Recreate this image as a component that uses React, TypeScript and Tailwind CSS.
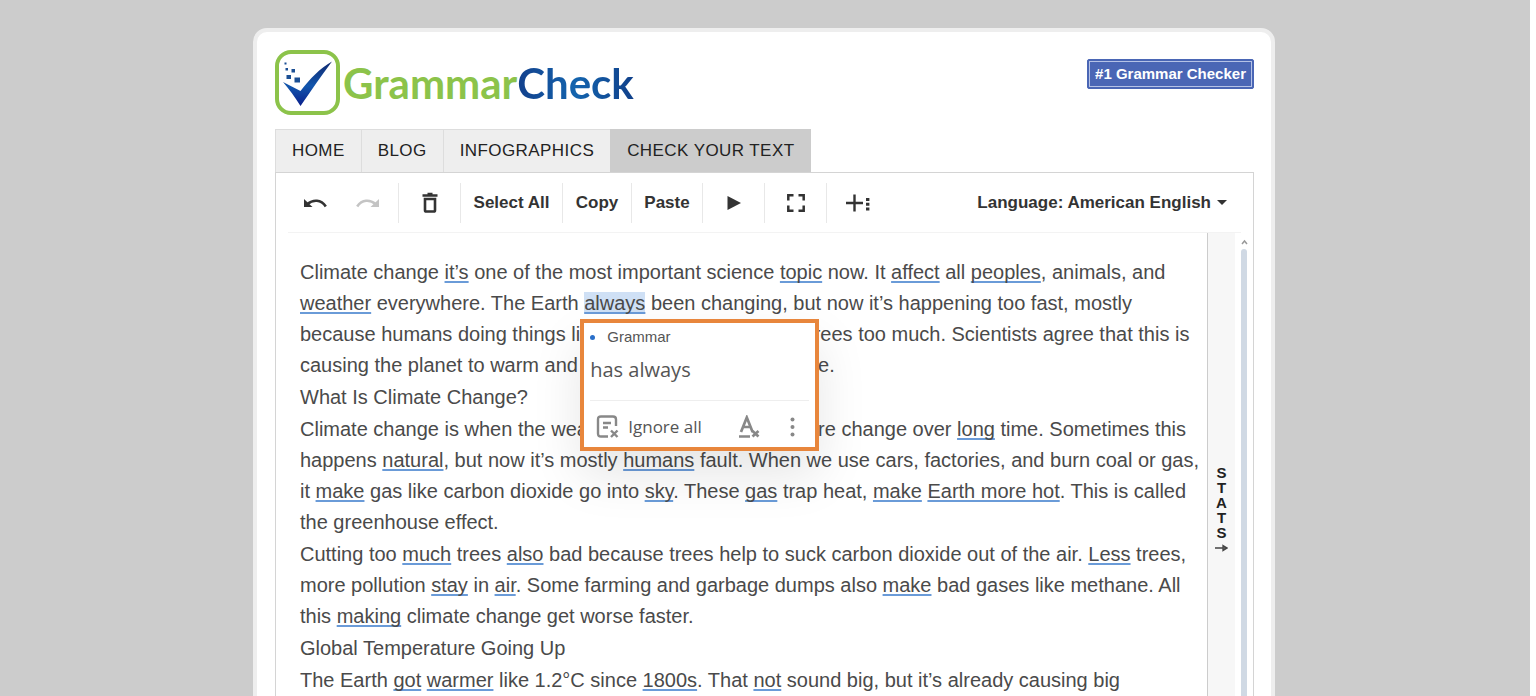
import React from 'react';

const issue = 'underline decoration-2 decoration-[#6a9bd8] underline-offset-2 [text-decoration-skip-ink:none]';

const Mark = ({ children }: { children: React.ReactNode }) => <span className={issue}>{children}</span>;

const Logo = () => (
  <a href="#" className="flex items-center gap-[3px] font-['Lato',sans-serif]">
    <svg width="65" height="65" viewBox="0 0 65 65" aria-hidden="true">
      <defs>
        <linearGradient id="check" x1="0" y1="1" x2="0" y2="0">
          <stop offset="0" stopColor="#0a1f8c" />
          <stop offset="0.45" stopColor="#1256ad" />
          <stop offset="1" stopColor="#10296f" />
        </linearGradient>
      </defs>
      <rect x="2" y="2" width="61" height="61" rx="14" fill="#fff" stroke="#8cc34a" strokeWidth="4" />
      <path d="M8 32 L25.5 41 C35 29 45 18 57 11.5 C46 26 36 41 25.5 56 C20 47 14 39 8 32 Z" fill="url(#check)" />
      <g fill="#1b4f94">
        <rect x="19.5" y="27.5" width="5.5" height="5" />
        <rect x="11.5" y="25" width="4.5" height="4" />
        <rect x="16.5" y="19" width="3.5" height="3.5" />
        <rect x="10.5" y="18" width="2.5" height="2.5" />
        <rect x="9.5" y="12.5" width="2" height="2" />
      </g>
    </svg>
    <span className="text-[42px] leading-[64px] font-bold">
      <span className="text-[#8cc34a]">Grammar</span>
      <span className="bg-linear-to-r from-[#12408c] via-[#1464ae] to-[#10408a] bg-clip-text text-transparent">Check</span>
    </span>
  </a>
);

const tabs = ['HOME', 'BLOG', 'INFOGRAPHICS'];

const Tabs = () => (
  <nav className="flex text-[17px] leading-[42px] tracking-wide text-[#222]">
    {tabs.map((tab) => (
      <a key={tab} href="#" className="border-l border-t border-[#ddd] bg-[#eee] px-4">
        {tab}
      </a>
    ))}
    <a href="#" className="border-t border-[#ccc] bg-[#ccc] px-[17px]">
      CHECK YOUR TEXT
    </a>
  </nav>
);

const UndoIcon = ({ className = '' }: { className?: string }) => (
  <svg className={className} width="24" height="24" viewBox="0 0 24 24" fill="none" aria-hidden="true">
    <path d="M1 8v8h8.5z" fill="currentColor" />
    <path d="M4.5 13C10 8.3 18 8.3 22.8 15.5" stroke="currentColor" strokeWidth="2.6" />
  </svg>
);

const Toolbar = () => (
  <div className="mx-3 flex h-[60px] items-center border-b border-[#f3f3f3] text-[17px] font-bold text-[#333]">
    <button aria-label="Undo" className="flex w-[53px] justify-center">
      <UndoIcon />
    </button>
    <button aria-label="Redo" className="flex w-[53px] justify-center text-[#c4c4c4]">
      <UndoIcon className="-scale-x-100" />
    </button>
    <button aria-label="Delete" className="ml-1 flex h-10 w-[62px] items-center justify-center border-l border-[#e8e8e8]">
      <svg width="24" height="24" viewBox="0 0 24 24" fill="none" stroke="currentColor" strokeWidth="2.6" aria-hidden="true">
        <path d="M4.5 4.5h15M9.5 3h5M7 8v11.2q0 1.3 1.3 1.3h7.4q1.3 0 1.3-1.3V8z" />
      </svg>
    </button>
    <button className="h-10 w-[102px] border-l border-[#e8e8e8]">Select All</button>
    <button className="h-10 w-[69px] border-l border-[#e8e8e8]">Copy</button>
    <button className="h-10 w-[71px] border-l border-[#e8e8e8]">Paste</button>
    <button aria-label="Play" className="flex h-10 w-[62px] items-center justify-center border-l border-[#e8e8e8]">
      <svg width="14" height="14" viewBox="0 0 14 14" fill="currentColor" aria-hidden="true">
        <path d="M0.5 0v14L14 7z" />
      </svg>
    </button>
    <button aria-label="Full screen" className="flex h-10 w-[62px] items-center justify-center border-l border-[#e8e8e8]">
      <svg width="18" height="18" viewBox="0 0 18 18" fill="none" stroke="currentColor" strokeWidth="2.5" aria-hidden="true">
        <path d="M6.5 1.3H1.3v5.2M11.5 1.3h5.2v5.2M6.5 16.7H1.3v-5.2M11.5 16.7h5.2v-5.2" />
      </svg>
    </button>
    <button aria-label="More tools" className="flex h-10 w-[62px] items-center justify-center border-l border-[#e8e8e8]">
      <svg width="24" height="18" viewBox="0 0 24 18" fill="currentColor" aria-hidden="true">
        <path d="M0 7.8h17v2.4H0zM7.3 0.5h2.4v17H7.3zM20 4h3.4v3H20zM20 8.7h3.4v3H20zM20 13.4h3.4v3H20z" />
      </svg>
    </button>
    <button className="ml-auto flex items-center gap-[6px] pr-[14px]">
      Language: American English
      <svg width="10" height="5" viewBox="0 0 10 5" fill="currentColor" aria-hidden="true">
        <path d="M0 0h10L5 5z" />
      </svg>
    </button>
  </div>
);

const Popup = () => (
  <div
    role="dialog"
    aria-label="Grammar suggestion"
    className="absolute top-[27px] -left-1 z-10 w-[239px] border-4 border-[#e8863c] bg-white px-1.5 text-[#555] shadow-[0_24px_50px_rgba(0,0,0,0.10)]"
  >
    <div className="flex items-center gap-3 pt-1 text-[15px] leading-5">
      <span className="size-[5px] rounded-full bg-[#2a6fc9]" />
      Grammar
    </div>
    <button className="block w-full pt-2 pb-4 text-left font-['Open_Sans',sans-serif] text-[20px] leading-[29px]">
      has always
    </button>
    <div className="flex h-[47px] items-center border-t border-[#eee] pt-1.5 pr-2 pl-1.5 font-['Open_Sans',sans-serif] text-[#888]">
      <button className="flex items-center gap-2 text-[17px] leading-6">
        <svg width="24" height="24" viewBox="0 0 24 24" fill="none" stroke="currentColor" strokeWidth="2.4" aria-hidden="true">
          <path d="M12 21.5H5Q2 21.5 2 18.5V4.5Q2 1.5 5 1.5h12Q20 1.5 20 4.5V11M7 8h8M7 12.5h5M15 15.5l6.5 6.5M21.5 15.5l-6.5 6.5" />
        </svg>
        <span className="text-[#555]">Ignore all</span>
      </button>
      <button aria-label="Clear formatting" className="ml-auto">
        <svg width="22" height="24" viewBox="0 0 22 24" fill="none" stroke="currentColor" strokeWidth="2.7" aria-hidden="true">
          <path d="M3 17L8.8 2.5L14.6 17M5 12h8M1 21.5h11M14.5 16l6 5.5M20.5 16l-6 5.5" />
        </svg>
      </button>
      <button aria-label="More" className="ml-6 px-1.5">
        <svg width="5" height="20" viewBox="0 0 5 20" fill="currentColor" aria-hidden="true">
          <circle cx="2.5" cy="2.5" r="2" />
          <circle cx="2.5" cy="10" r="2" />
          <circle cx="2.5" cy="17.5" r="2" />
        </svg>
      </button>
    </div>
  </div>
);

const Editor = () => (
  <div className="flex flex-1 flex-col gap-px pt-6 pr-0.5 pb-[88px] pl-6 text-xl leading-[31px] text-[#4a4a4a]">
    <p>
      Climate change <Mark>it’s</Mark> one of the most important science <Mark>topic</Mark> now. It <Mark>affect</Mark> all{' '}
      <Mark>peoples</Mark>, animals, and <Mark>weather</Mark> everywhere. The Earth{' '}
      <span className="relative inline-block leading-[22px]">
        <span className={`${issue} bg-[#cfe0f5]`}>always</span>
        <Popup />
      </span>{' '}
      been changing, but now it’s happening too fast, mostly because humans doing things like burning oil and cutting trees too
      much. Scientists agree that this is causing the planet to warm and making weather so extreme.
    </p>
    <p>What Is Climate Change?</p>
    <p>
      Climate change is when the weather and the air temperature change over <Mark>long</Mark> time. Sometimes this happens{' '}
      <Mark>natural</Mark>, but now it’s mostly <Mark>humans</Mark> fault. When we use cars, factories, and burn coal or gas, it{' '}
      <Mark>make</Mark> gas like carbon dioxide go into <Mark>sky</Mark>. These <Mark>gas</Mark> trap heat, <Mark>make</Mark>{' '}
      <Mark>Earth more hot</Mark>. This is called the greenhouse effect.
    </p>
    <p>
      Cutting too <Mark>much</Mark> trees <Mark>also</Mark> bad because trees help to suck carbon dioxide out of the air.{' '}
      <Mark>Less</Mark> trees, more pollution <Mark>stay</Mark> in <Mark>air</Mark>. Some farming and garbage dumps also{' '}
      <Mark>make</Mark> bad gases like methane. All this <Mark>making</Mark> climate change get worse faster.
    </p>
    <p>Global Temperature Going Up</p>
    <p>
      The Earth <Mark>got</Mark> <Mark>warmer</Mark> like 1.2°C since <Mark>1800s</Mark>. That <Mark>not</Mark> sound big, but
      it’s already causing big
    </p>
  </div>
);

const StatsPanel = () => (
  <button className="flex w-7 flex-col items-center justify-center border-l border-[#ccc] bg-[#f7f7f7] text-[15px] leading-[15px] font-bold text-[#222]">
    {['S', 'T', 'A', 'T', 'S'].map((letter, i) => (
      <span key={i}>{letter}</span>
    ))}
    <svg className="mt-1" width="13" height="8" viewBox="0 0 13 8" fill="none" stroke="#444" strokeWidth="1.3" aria-hidden="true">
      <path d="M0 4h12M8 1.5L12 4L8 6.5z" />
    </svg>
  </button>
);

export default function App() {
  return (
    <div className="h-screen overflow-hidden bg-white pr-[6px] font-['Liberation_Sans',Arial,sans-serif]">
      <div className="min-h-full bg-[#ccc] pt-7 pr-[18px] pl-4">
        <main className="mx-auto max-w-[1022px] rounded-[14px] border-4 border-[#eee] bg-white px-[17px] pt-[18px] pb-6 pl-[18px]">
          <header className="flex items-start justify-between">
            <Logo />
            <a
              href="#"
              className="mt-[9px] rounded-xs border border-[#4a66b5] bg-[#4a66b5] p-px text-[15px] leading-6 font-bold text-white"
            >
              <span className="block border border-[#b5c2e6] px-[5px]">#1 Grammar Checker</span>
            </a>
          </header>
          <div className="mt-[14px]">
            <Tabs />
          </div>
          <section className="border border-[#d4d4d4]">
            <Toolbar />
            <div className="flex">
              <Editor />
              <StatsPanel />
              <div className="flex w-[18px] flex-col items-center gap-1 pt-1.5" aria-hidden="true">
                <svg width="7" height="6" viewBox="0 0 7 6" fill="none" stroke="#999" strokeWidth="1.5">
                  <path d="M1 5L3.5 2L6 5" />
                </svg>
                <div className="w-[6px] flex-1 rounded-t bg-[#d0d9e4]" />
              </div>
            </div>
          </section>
        </main>
      </div>
    </div>
  );
}
